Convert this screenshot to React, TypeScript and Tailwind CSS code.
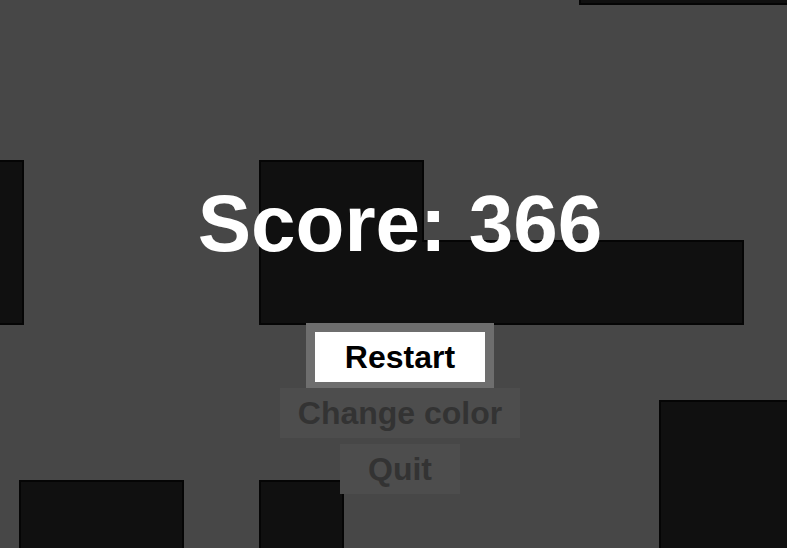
const blocks = [
  { left: 579, top: -10, width: 240, height: 15 },
  { left: -10, top: 160, width: 34, height: 165 },
  { left: 259, top: 240, width: 485, height: 85 },
  { left: 19, top: 480, width: 165, height: 90 },
  { left: 259, top: 480, width: 85, height: 90 },
  { left: 659, top: 400, width: 160, height: 170 },
];

function Block({ left, top, width, height }: { left: number; top: number; width: number; height: number }) {
  return (
    <div
      className="absolute border-2 border-[#050505] bg-[#101010]"
      style={{ left, top, width, height }}
    />
  );
}

export default function App() {
  return (
    <div className="relative h-[548px] w-[787px] overflow-hidden bg-[#474747] font-['Liberation_Sans',Arial,sans-serif]">
      {blocks.map((b, i) => (
        <Block key={i} {...b} />
      ))}
      {/* upper part of the middle obstacle, drawn over the wide one */}
      <div className="absolute left-[259px] top-[160px] h-[82px] w-[165px] border-2 border-b-0 border-[#050505] bg-[#101010]" />

      <div className="absolute left-0 top-0 flex w-[800px] flex-col items-center pt-[184px]">
        <h1 className="text-[80px] font-bold leading-none text-white">Score: 366</h1>
        <button className="mt-[68px] flex h-[50px] w-[170px] items-center justify-center bg-white text-[32px] font-bold leading-none text-black outline outline-[9px] outline-[#6e6e6e]">
          Restart
        </button>
        <button className="mt-[6px] flex h-[50px] w-[240px] items-center justify-center bg-[#4d4d4d] text-[32px] font-bold leading-none text-[#333333]">
          Change color
        </button>
        <button className="mt-[6px] flex h-[50px] w-[120px] items-center justify-center bg-[#4d4d4d] text-[32px] font-bold leading-none text-[#333333]">
          Quit
        </button>
      </div>
    </div>
  );
}
